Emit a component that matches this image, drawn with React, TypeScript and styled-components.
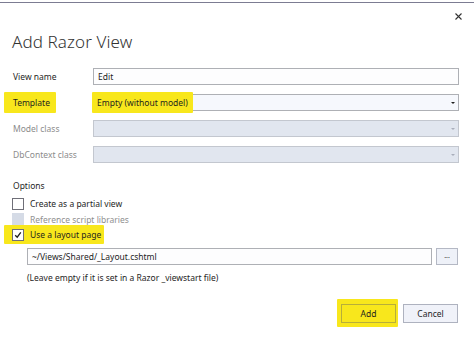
import styled, { createGlobalStyle } from "styled-components";

const GlobalStyle = createGlobalStyle`
  html, body {
    margin: 0;
    padding: 0;
    background: #ffffff;
  }
  body {
    font-family: "Noto Sans", "Open Sans", sans-serif;
    color: #1e1e1e;
  }
`;

const Marker = "#f8e71c";

const Window = styled.div`
  width: 474px;
  height: 338px;
  box-sizing: border-box;
  padding-top: 2px;
  overflow: hidden;
`;

const TopLine = styled.div`
  height: 1px;
  background: #7c7c92;
`;

const TitleBar = styled.div`
  display: flex;
  justify-content: flex-end;
  height: 23px;
  padding-right: 10px;
`;

const Close = styled.div`
  width: 12px;
  height: 23px;
  display: flex;
  align-items: center;
  justify-content: center;
  padding-top: 3px;
  box-sizing: border-box;
`;

const Title = styled.h1`
  margin: 5px 0 0 12px;
  font-size: 17px;
  font-weight: 300;
  line-height: 22px;
  color: #333333;
  letter-spacing: 0.1px;
`;

const Form = styled.div`
  display: grid;
  grid-template-columns: 80px 366px;
  grid-auto-rows: 17px;
  row-gap: 9px;
  margin: 15px 0 0 13px;
  font-size: 8.5px;
`;

const Label = styled.div<{ disabled?: boolean }>`
  display: flex;
  align-items: center;
  color: ${(p) => (p.disabled ? "#8c8c8c" : "#1e1e1e")};
`;

const Mark = styled.span`
  background: ${Marker};
  padding: 5px 6px 5px 9px;
  margin-left: -9px;
  border-radius: 1px;
`;

const Field = styled.div<{ variant: "text" | "select" | "disabled" }>`
  box-sizing: border-box;
  height: 17px;
  display: flex;
  align-items: center;
  justify-content: space-between;
  padding: 0 4px;
  border: 1px solid
    ${(p) => (p.variant === "disabled" ? "#c3c7cf" : "#aeb0b5")};
  background: ${(p) =>
    p.variant === "text" ? "#fdfdfe" : p.variant === "select" ? "#f6f8fd" : "#e1e6ef"};
  font-size: 8.5px;
  color: #1e1e1e;
`;

const FieldMark = styled.span`
  background: ${Marker};
  margin-left: -6px;
  padding: 5px 5px 5px 5px;
  border-radius: 1px;
`;

const Arrow = styled.span<{ disabled?: boolean }>`
  width: 0;
  height: 0;
  border-left: 2px solid transparent;
  border-right: 2px solid transparent;
  border-top: 2px solid ${(p) => (p.disabled ? "#a9aebb" : "#1e1e1e")};
  margin-right: -1px;
`;

const Options = styled.div`
  margin: 16px 0 0 12px;
  font-size: 8.5px;
`;

const SectionLabel = styled.div`
  margin-left: 1px;
  height: 14px;
  line-height: 14px;
`;

const CheckList = styled.div`
  display: flex;
  flex-direction: column;
  margin-top: 3px;
`;

const CheckRow = styled.div<{ disabled?: boolean; marked?: boolean }>`
  display: flex;
  align-items: center;
  gap: 6px;
  height: 15.5px;
  color: ${(p) => (p.disabled ? "#8f8f8f" : "#1e1e1e")};
  ${(p) =>
    p.marked &&
    `
    background: ${Marker};
    margin-left: -8px;
    padding-left: 8px;
    width: 92px;
    height: 19px;
    margin-top: -2px;
    border-radius: 1px;
  `}
`;

const Box = styled.span<{ disabled?: boolean }>`
  box-sizing: border-box;
  width: 12px;
  height: 12px;
  display: flex;
  align-items: center;
  justify-content: center;
  border: 1px solid ${(p) => (p.disabled ? "#d5dbe6" : "#6f6f78")};
  background: ${(p) => (p.disabled ? "#d5dbe6" : "#ffffff")};
`;

const PathRow = styled.div`
  display: flex;
  gap: 4px;
  margin: 4px 0 0 15px;
`;

const PathInput = styled.div`
  box-sizing: border-box;
  width: 405px;
  height: 17px;
  border: 1px solid #aeb0b5;
  background: #fdfdfe;
  padding: 0 4px;
  display: flex;
  align-items: center;
`;

const Browse = styled.div`
  box-sizing: border-box;
  width: 22px;
  height: 17px;
  border: 1px solid #b4b8c4;
  background: #eef1f8;
  display: flex;
  align-items: center;
  justify-content: center;
  font-size: 7px;
  color: #333;
  padding-bottom: 3px;
`;

const Hint = styled.div`
  margin: 6px 0 0 15px;
  height: 14px;
  line-height: 14px;
`;

const Footer = styled.div`
  display: flex;
  justify-content: flex-end;
  align-items: center;
  gap: 5px;
  margin: 14px 16px 0 0;
`;

const ButtonMark = styled.div`
  background: ${Marker};
  padding: 5px 2px 4px 4px;
  border-radius: 1px;
`;

const Button = styled.div<{ primary?: boolean }>`
  box-sizing: border-box;
  width: 55px;
  height: 19px;
  display: flex;
  align-items: center;
  justify-content: center;
  font-size: 8.5px;
  color: #1e1e1e;
  border: 1px solid ${(p) => (p.primary ? "#b7ae3a" : "#aeb2bf")};
  background: ${(p) => (p.primary ? Marker : "#f0f2f9")};
`;

function App() {
  return (
    <Window>
      <GlobalStyle />
      <TopLine />
      <TitleBar>
        <Close>
          <svg width="7" height="7" viewBox="0 0 7 7">
            <path d="M0.5 0.5 L6.5 6.5 M6.5 0.5 L0.5 6.5" stroke="#333" strokeWidth="1.1" />
          </svg>
        </Close>
      </TitleBar>
      <Title>Add Razor View</Title>

      <Form>
        <Label>View name</Label>
        <Field variant="text">Edit</Field>

        <Label>
          <Mark>Template</Mark>
        </Label>
        <Field variant="select">
          <FieldMark>Empty (without model)</FieldMark>
          <Arrow />
        </Field>

        <Label disabled>Model class</Label>
        <Field variant="disabled">
          <span />
          <Arrow disabled />
        </Field>

        <Label disabled>DbContext class</Label>
        <Field variant="disabled">
          <span />
          <Arrow disabled />
        </Field>
      </Form>

      <Options>
        <SectionLabel>Options</SectionLabel>
        <CheckList>
          <CheckRow>
            <Box />
            Create as a partial view
          </CheckRow>
          <CheckRow disabled>
            <Box disabled />
            Reference script libraries
          </CheckRow>
          <CheckRow marked>
            <Box>
              <svg width="8" height="8" viewBox="0 0 8 8">
                <path d="M1.2 4.2 L3.2 6.2 L6.8 1.4" stroke="#1e1e1e" strokeWidth="1.3" fill="none" />
              </svg>
            </Box>
            Use a layout page
          </CheckRow>
        </CheckList>
        <PathRow>
          <PathInput>~/Views/Shared/_Layout.cshtml</PathInput>
          <Browse>...</Browse>
        </PathRow>
        <Hint>(Leave empty if it is set in a Razor _viewstart file)</Hint>
      </Options>

      <Footer>
        <ButtonMark>
          <Button primary>Add</Button>
        </ButtonMark>
        <Button>Cancel</Button>
      </Footer>
    </Window>
  );
}

export default App;
